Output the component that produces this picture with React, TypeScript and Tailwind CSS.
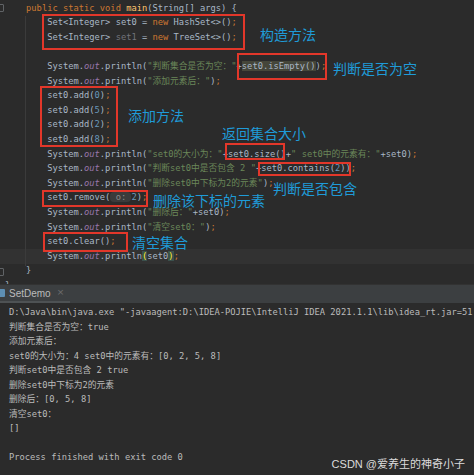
import React from "react";

type Seg = [string, string?];

const K = "text-[#cc7832]";
const S = "text-[#6a8759]";
const N = "text-[#6897bb]";
const F = "text-[#9876aa] italic";
const M = "text-[#ffc66d]";
const U = "text-[#72737a]";

const sout: Seg[] = [["        System."], ["out", F], [".println("]];

const code: Seg[][] = [
  [["    "], ["public static void ", K], ["main", M], ["(String[] args) {"]],
  [["        Set<Integer> set0 = "], ["new", K], [" HashSet<>()"], [";", K]],
  [["        Set<Integer> "], ["set1", U], [" = "], ["new", K], [" TreeSet<>()"], [";", K]],
  [[" "]],
  [...sout, ["\"判断集合是否为空：\"", S], ["+"], ["set0.isEmpty()", "bg-[#45463a]"], [")"], [";", K]],
  [...sout, ["\"添加元素后：\"", S], [")"], [";", K]],
  [["        set0.add("], ["0", N], [")"], [";", K]],
  [["        set0.add("], ["5", N], [")"], [";", K]],
  [["        set0.add("], ["2", N], [")"], [";", K]],
  [["        set0.add("], ["8", N], [")"], [";", K]],
  [...sout, ["\"set0的大小为：\"", S], ["+set0.size()+"], ["\" set0中的元素有：\"", S], ["+set0)"], [";", K]],
  [...sout, ["\"判断set0中是否包含 2 \"", S], ["+set0.contains("], ["2", N], ["))"], [";", K]],
  [...sout, ["\"删除set0中下标为2的元素\"", S], [")"], [";", K]],
  [["        set0.remove("], [" o: ", "text-[#8c8c8c] bg-[#3b3b3b] rounded-sm"], ["2", N], [")"], [";", K]],
  [...sout, ["\"删除后：\"", S], ["+set0)"], [";", K]],
  [...sout, ["\"清空set0：\"", S], [")"], [";", K]],
  [["        set0.clear()"], [";", K]],
  [...sout.slice(0, 2), [".println"], ["(", "bg-[#3b514d] text-[#ffef28]"], ["set0"], [")", "bg-[#3b514d] text-[#ffef28]"], [";", K]],
  [["    }"]],
  [["}"]],
];

const output = [
  "D:\\Java\\bin\\java.exe \"-javaagent:D:\\IDEA-POJIE\\IntelliJ IDEA 2021.1.1\\lib\\idea_rt.jar=51",
  "判断集合是否为空：true",
  "添加元素后：",
  "set0的大小为：4 set0中的元素有：[0, 2, 5, 8]",
  "判断set0中是否包含 2 true",
  "删除set0中下标为2的元素",
  "删除后：[0, 5, 8]",
  "清空set0：",
  "[]",
  " ",
  "Process finished with exit code 0",
];

const mono = "font-['DejaVu_Sans_Mono','Noto_Sans_CJK_SC',monospace] text-[8.75px]";

function Note({ text, className }: { text: string; className: string }) {
  return (
    <div className={`absolute font-['Noto_Sans_CJK_SC',sans-serif] text-[14px] leading-[14px] text-[#1f9bd8] whitespace-nowrap ${className}`}>
      {text}
    </div>
  );
}

function RedBox({ className }: { className: string }) {
  return <div className={`absolute border-2 border-[#e2372a] ${className}`} />;
}

export default function App() {
  return (
    <div className="w-[474px] h-[475px] bg-[#2b2b2b] overflow-hidden relative flex flex-col">
      {/* editor */}
      <div className="relative h-[284px] overflow-hidden shrink-0">
        {/* current line */}
        <div className="absolute left-0 right-0 top-[249px] h-[14.6px] bg-[#323232]" />
        {/* indent guide */}
        <div className="absolute left-[25px] top-[16px] h-[250px] w-px bg-[#3b3b3b]" />
        {/* fold markers */}
        <div className="absolute -left-[3px] top-[4px] w-[7px] h-[8px] border border-[#606366] rounded-[1px]" />
        <div className="absolute -left-[3px] top-[268px] w-[7px] h-[8px] border border-[#606366] rounded-[1px]" />

        <div className={`relative pt-[0.7px] pl-[5px] ${mono} text-[#a9b7c6]`}>
          {code.map((line, i) => (
            <div key={i} className="h-[14.6px] leading-[14.6px] whitespace-pre">
              {line.map(([t, c], j) => (
                <span key={j} className={c}>
                  {t}
                </span>
              ))}
            </div>
          ))}
        </div>

        <RedBox className="left-[42px] top-[14px] w-[203px] h-[36px]" />
        <RedBox className="left-[237px] top-[53px] w-[90px] h-[27px]" />
        <RedBox className="left-[40px] top-[86px] w-[78px] h-[61px]" />
        <RedBox className="left-[225px] top-[143px] w-[60px] h-[17px]" />
        <RedBox className="left-[258px] top-[162px] w-[93px] h-[14px]" />
        <RedBox className="left-[42px] top-[190px] w-[106px] h-[17px]" />
        <RedBox className="left-[43px] top-[232px] w-[85px] h-[20px]" />

        <Note text="构造方法" className="left-[260px] top-[27px]" />
        <Note text="判断是否为空" className="left-[333px] top-[61px]" />
        <Note text="添加方法" className="left-[128px] top-[108px]" />
        <Note text="返回集合大小" className="left-[222px] top-[126px]" />
        <Note text="判断是否包含" className="left-[273px] top-[181px]" />
        <Note text="删除该下标的元素" className="left-[153px] top-[193px]" />
        <Note text="清空集合" className="left-[132px] top-[235px]" />
      </div>

      {/* run tool window tab bar */}
      <div className="h-[19px] shrink-0 bg-[#3c3f41] flex items-stretch border-t border-[#323232]">
        <div className="flex items-center gap-[4px] pr-[6px] border-b-2 border-[#4e5254]">
          <div className="w-[5px] h-[8px] bg-[#5e8fb3] rounded-r-[1px]" />
          <span className="font-['Liberation_Sans',sans-serif] text-[10px] text-[#bbbbbb]">SetDemo</span>
          <span className="text-[9px] text-[#6e6e6e] ml-[2px] font-['DejaVu_Sans',sans-serif]">×</span>
        </div>
      </div>

      {/* console */}
      <div className={`pt-[2px] pl-[9px] ${mono} text-[#bbbbbb]`}>
        {output.map((l, i) => (
          <div key={i} className="h-[14.5px] leading-[14.5px] whitespace-pre">
            {l}
          </div>
        ))}
      </div>

      <div className="absolute right-[9px] bottom-[3px] font-['Liberation_Sans','Noto_Sans_CJK_SC',sans-serif] text-[11px] text-[#dcdcdc]">
        CSDN @爱养生的神奇小子
      </div>
    </div>
  );
}
